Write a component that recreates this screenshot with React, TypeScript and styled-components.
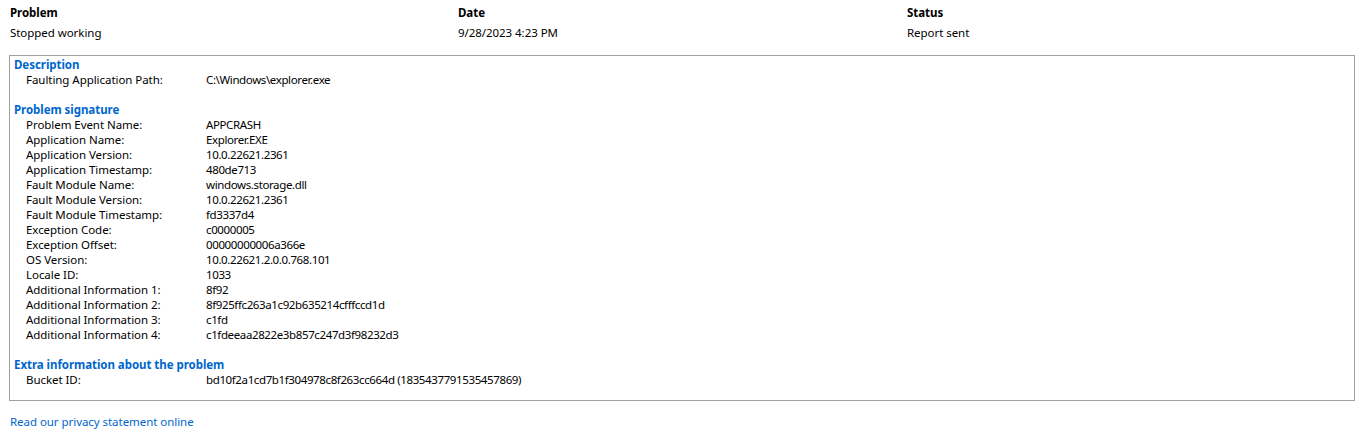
import React from "react";
import styled, { createGlobalStyle } from "styled-components";

const Global = createGlobalStyle`
  html, body { margin: 0; padding: 0; background: #ffffff; }
  body { font-family: "Noto Sans", "Open Sans", sans-serif; font-size: 11.5px; letter-spacing: -0.05px; color: #000; }
`;

const Page = styled.div`
  width: 1361px;
  padding: 5px 6px 0 10px;
  box-sizing: border-box;
`;

const SummaryGrid = styled.div`
  display: grid;
  grid-template-columns: 448px 449px 1fr;
  row-gap: 5px;
  line-height: 15px;
`;

const HeadCell = styled.div`
  font-weight: 700;
`;

const Cell = styled.div``;

const DetailBox = styled.div`
  margin-top: 15px;
  margin-left: -1px;
  width: 1346px;
  box-sizing: border-box;
  border: 1px solid #a0a0a0;
  padding: 1px 0 13px 4px;
  line-height: 15px;
`;

const SectionTitle = styled.div<{ $gap?: boolean }>`
  color: #0066cc;
  font-weight: 700;
  margin-top: ${(p) => (p.$gap ? "15px" : "0")};
`;

const Row = styled.div`
  display: grid;
  grid-template-columns: 180px 1fr;
  padding-left: 12px;
`;

const Label = styled.span``;

const Value = styled.span`
  letter-spacing: -0.38px;
`;

const Link = styled.a`
  display: inline-block;
  margin-top: 13px;
  color: #0066cc;
  text-decoration: none;
  line-height: 15px;
`;

type Pair = [string, string];

const signature: Pair[] = [
  ["Problem Event Name:", "APPCRASH"],
  ["Application Name:", "Explorer.EXE"],
  ["Application Version:", "10.0.22621.2361"],
  ["Application Timestamp:", "480de713"],
  ["Fault Module Name:", "windows.storage.dll"],
  ["Fault Module Version:", "10.0.22621.2361"],
  ["Fault Module Timestamp:", "fd3337d4"],
  ["Exception Code:", "c0000005"],
  ["Exception Offset:", "00000000006a366e"],
  ["OS Version:", "10.0.22621.2.0.0.768.101"],
  ["Locale ID:", "1033"],
  ["Additional Information 1:", "8f92"],
  ["Additional Information 2:", "8f925ffc263a1c92b635214cfffccd1d"],
  ["Additional Information 3:", "c1fd"],
  ["Additional Information 4:", "c1fdeeaa2822e3b857c247d3f98232d3"],
];

const Rows = ({ items }: { items: Pair[] }) => (
  <>
    {items.map(([k, v]) => (
      <Row key={k}>
        <Label>{k}</Label>
        <Value>{v}</Value>
      </Row>
    ))}
  </>
);

export default function App() {
  return (
    <Page>
      <Global />
      <SummaryGrid>
        <HeadCell>Problem</HeadCell>
        <HeadCell>Date</HeadCell>
        <HeadCell>Status</HeadCell>
        <Cell>Stopped working</Cell>
        <Cell>9/28/2023 4:23 PM</Cell>
        <Cell>Report sent</Cell>
      </SummaryGrid>
      <DetailBox>
        <SectionTitle>Description</SectionTitle>
        <Rows items={[["Faulting Application Path:", "C:\\Windows\\explorer.exe"]]} />
        <SectionTitle $gap>Problem signature</SectionTitle>
        <Rows items={signature} />
        <SectionTitle $gap>Extra information about the problem</SectionTitle>
        <Rows items={[["Bucket ID:", "bd10f2a1cd7b1f304978c8f263cc664d (1835437791535457869)"]]} />
      </DetailBox>
      <Link href="#">Read our privacy statement online</Link>
    </Page>
  );
}
